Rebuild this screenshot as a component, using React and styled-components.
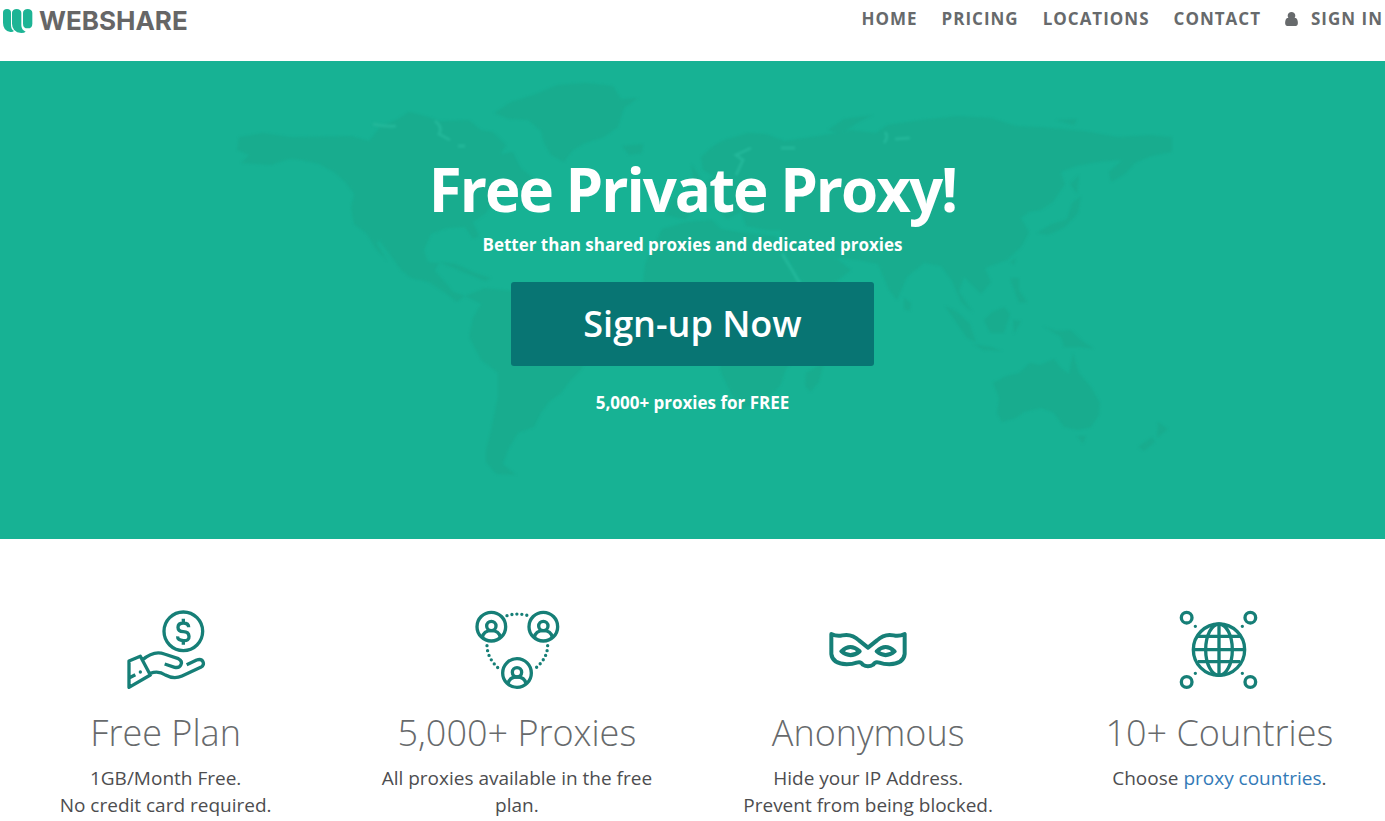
import styled, { createGlobalStyle } from "styled-components";

const GlobalStyle = createGlobalStyle`
  * {
    box-sizing: border-box;
  }

  body {
    margin: 0;
    background: #fff;
    color: #4d4d4f;
    font-family: "Open Sans", "Noto Sans", sans-serif;
  }

  h1,
  h2,
  p {
    margin: 0;
  }
`;

const LogoMark = () => (
  <svg width="32" height="25" viewBox="6 24 96 75" fill="#1db495" aria-hidden="true">
    <path d="M9 38a12 11 0 0 1 24 0v38q0 12 9 17q-4 4-11 3q-22-4-22-28z" />
    <path d="M36 38a14 11 0 0 1 28 0v38q0 14 13 19q-4 4-13 4q-28-3-28-28z" />
    <path d="M69 38a14 11 0 0 1 28 0v33q0 14-14 14t-14-14z" />
  </svg>
);

const UserIcon = () => (
  <svg width="13" height="14" viewBox="0 128 1280 1408" fill="currentColor" aria-hidden="true">
    <path d="M1280 1271q0 109-62.5 187t-150.5 78h-854q-88 0-150.5-78t-62.5-187q0-85 8.5-160.5t31.5-152 58.5-131 94-89 134.5-34.5q131 128 313 128t313-128q76 0 134.5 34.5t94 89 58.5 131 31.5 152 8.5 160.5zM1024 512q0 159-112.5 271.5t-271.5 112.5-271.5-112.5-112.5-271.5 112.5-271.5 271.5-112.5 271.5 112.5 112.5 271.5z" />
  </svg>
);

const WorldMap = () => (
  <MapSvg viewBox="202 61 980 478" aria-hidden="true">
    {/* the americas */}
    <path d="M238 137L262 133 290 137 350 136 368 141 380 126 395 120 408 112 424 116 440 121 468 120 480 130 492 132 505 145 500 154 512 152 520 168 532 178 536 186 520 190 505 196 492 203 484 214 472 222 478 236 472 239 464 227 446 228 430 234 423 250 427 262 438 263 434 271 445 283 452 292 464 296 456 302 443 292 428 282 410 278 400 270 390 256 378 240 376 244 386 261 374 248 366 234 353 224 350 208 353 194 345 183 333 172 318 164 300 160 288 159 270 165 240 163 248 155 236 150z" />
    <path d="M438 262L455 264 472 272 490 278 484 281 462 272z" />
    <path d="M493 113L510 102 535 94 556 85 585 83 612 86 620 99 637 98 623 108 617 127 603 137 584 143 572 150 563 162 550 155 543 143 540 131 527 120 508 119z" />
    <path d="M464 296L484 288 512 291 535 302 548 318 572 328 594 338 589 352 580 370 570 380 560 393 548 402 540 413 533 427 517 433 507 450 502 464 515 475 495 474 485 462 485 450 490 430 497 397 497 373 480 360 468 337 472 318 480 304z" />
    {/* europe, asia and africa */}
    <path d="M700 157L712 146 723 140 747 133 765 134 784 141 823 135 850 130 875 133 886 125 920 120 957 116 990 118 1015 126 1040 127 1083 131 1117 137 1148 135 1171 137 1171 152 1150 156 1134 163 1124 174 1110 182 1108 172 1121 160 1097 162 1075 166 1060 172 1064 184 1052 202 1040 210 1028 212 1020 218 1028 232 1021 246 1006 260 984 268 990 282 980 294 969 283 963 277 958 292 972 313 960 302 951 281 940 266 923 263 906 277 896 300 888 290 877 264 858 260 835 258 850 270 835 282 808 294 792 268 780 247 780 230 766 230 745 226 740 212 726 219 713 206 696 208 684 219 665 215 670 200 690 195 702 186 713 176 702 170z" />
    <path d="M661 229L685 222 711 220 720 229 744 233 775 236 780 253 794 278 806 291 828 290 818 307 801 325 801 350 785 369 779 386 762 402 740 408 730 393 719 370 722 348 711 327 700 317 666 317 648 302 642 284 644 264z" />
    <path d="M805 373L817 366 823 362 818 382 809 392 804 385z" />
    <path d="M690 164L699 177 701 187 686 189 692 179zM621 146L642 144 641 153 628 155z" />
    <path d="M827 130L843 119 872 115 856 123 840 134zM1055 120L1076 119 1073 125z" />
    <path d="M1036 233L1051 224 1066 219 1071 203 1080 196 1077 213 1064 227 1047 235zM1069 184L1078 175 1076 194z" />
    {/* oceania */}
    <path d="M992 383L1005 376 1018 373 1029 363 1039 365 1053 359 1060 368 1068 374 1072 353 1078 373 1090 387 1099 403 1098 415 1090 427 1077 430 1063 427 1053 413 1040 408 1023 412 1015 418 1001 422 996 413 998 398z" />
    <path d="M1076 436L1085 436 1082 444zM1157 422L1167 429 1156 438zM1151 437L1154 442 1143 451 1137 447z" />
    <path d="M1042 326L1055 331 1070 330 1080 340 1093 349 1078 347 1063 347 1060 337z" />
    <path d="M983 320L991 312 1003 307 1009 314 1003 333 989 333zM944 306L955 311 969 324 975 342 966 338zM972 344L990 347 1001 351 982 350zM1012 320L1020 321 1013 334zM1009 278L1018 278 1018 290 1026 302 1018 303zM903 298L910 303 909 311 903 309zM1009 262L1015 258 1013 265z" />
    <g fill="none" stroke="#22b799" strokeWidth="3">
      <path d="M372 124Q384 127 395 126M434 121Q442 127 438 134L449 140M457 146L464 146M735 175L742 160 735 155 750 148M780 148L794 148M883 143Q888 137 884 132M894 139L909 138M781 254L791 270 799 284" />
    </g>
  </MapSvg>
);

const HandCoin = () => (
  <IconSvg viewBox="48 30 240 240">
    <circle cx="220" cy="94" r="58" />
    <path d="M236 82q0-13-16-13t-16 13t16 13t17 14t-17 13t-17-13M220 56v13M220 122v12" />
    <path d="M57 183L91 169 121 225 57 262zM57 234L76 224M97 180C120 160 142 154 163 162L205 176Q218 183 213 194T194 202L164 192M121 220C139 213 153 216 166 225Q192 239 216 228L272 202Q284 195 279 185T260 180L230 194" />
    <circle cx="91" cy="216" r="5" fill="currentColor" stroke="none" />
  </IconSvg>
);

const People = () => (
  <IconSvg viewBox="37 30 240 240">
    {[
      [80, 80],
      [236, 80],
      [157, 219],
    ].map(([x, y]) => (
      <g key={`${x}-${y}`} transform={`translate(${x} ${y})`}>
        <circle r="43" />
        <circle cy="-2" r="14" />
        <path d="M-27 32Q-23 12 0 12T27 32" />
      </g>
    ))}
    <path
      d="M127 47Q157 38 187 46M67 137Q68 176 104 207M249 137Q248 176 212 205"
      strokeLinecap="round"
      strokeDasharray="0 15"
    />
  </IconSvg>
);

const Mask = () => (
  <IconSvg viewBox="40 0 240 240" $stroke={12}>
    <path d="M50 72Q67 80 83 76Q111 70 133 91L160 113 187 91Q209 70 237 76Q253 80 270 72V132Q267 161 224 163Q207 163 194 158Q181 154 176 164Q160 174 144 164Q139 154 126 158Q113 163 96 163Q53 161 50 132z" />
    <path d="M80 124Q107 98 135 124Q107 147 80 124zM186 124Q213 98 240 124Q213 147 186 124z" />
  </IconSvg>
);

const Globe = () => (
  <IconSvg viewBox="45 30 240 240">
    <circle cx="165" cy="149" r="77" />
    <ellipse cx="165" cy="149" rx="40" ry="77" />
    <path d="M165 72V226M88 149H242M102 109H228M102 185H228" />
    <circle cx="68" cy="53" r="16" />
    <circle cx="259" cy="53" r="16" />
    <circle cx="68" cy="246" r="16" />
    <circle cx="259" cy="246" r="16" />
    <path d="M94 79h0M235 79h0M94 220h0M235 220h0" strokeLinecap="round" />
  </IconSvg>
);

const navLinks = ["Home", "Pricing", "Locations", "Contact"];

const features = [
  {
    icon: <HandCoin />,
    title: "Free Plan",
    text: (
      <>
        1GB/Month Free.
        <br />
        No credit card required.
      </>
    ),
  },
  {
    icon: <People />,
    title: "5,000+ Proxies",
    text: "All proxies available in the free plan.",
  },
  {
    icon: <Mask />,
    title: "Anonymous",
    text: (
      <>
        Hide your IP Address.
        <br />
        Prevent from being blocked.
      </>
    ),
  },
  {
    icon: <Globe />,
    title: "10+ Countries",
    text: (
      <>
        Choose <a href="#countries">proxy countries</a>.
      </>
    ),
  },
];

const App = () => {
  return (
    <>
      <GlobalStyle />
      <Header>
        <Logo href="#home">
          <LogoMark />
          WEBSHARE
        </Logo>
        <Nav>
          {navLinks.map((link) => (
            <NavLink key={link} href={`#${link.toLowerCase()}`}>
              {link}
            </NavLink>
          ))}
          <NavLink href="#sign-in">
            <UserIcon />
            Sign in
          </NavLink>
        </Nav>
      </Header>
      <main>
        <Hero>
          <WorldMap />
          <HeroContent>
            <HeroTitle>Free Private Proxy!</HeroTitle>
            <HeroText>Better than shared proxies and dedicated proxies</HeroText>
            <SignUpButton type="button">Sign-up Now</SignUpButton>
            <HeroText>5,000+ proxies for FREE</HeroText>
          </HeroContent>
        </Hero>
        <Features>
          {features.map(({ icon, title, text }) => (
            <Feature key={title}>
              {icon}
              <FeatureTitle>{title}</FeatureTitle>
              <FeatureText>{text}</FeatureText>
            </Feature>
          ))}
        </Features>
      </main>
    </>
  );
};

export default App;

const Header = styled.header`
  display: flex;
  align-items: flex-start;
  justify-content: space-between;
  height: 61px;
  padding: 8px 2px 0;
`;

const Logo = styled.a`
  display: flex;
  align-items: center;
  gap: 5px;
  color: #666;
  font-family: Inter, "Liberation Sans", sans-serif;
  font-size: 26px;
  font-weight: 700;
  line-height: 25px;
  text-decoration: none;
`;

const Nav = styled.nav`
  display: flex;
  gap: 24px;
`;

const NavLink = styled.a`
  display: flex;
  align-items: center;
  gap: 13px;
  color: #676a6c;
  font-size: 17px;
  font-weight: 700;
  letter-spacing: 1px;
  line-height: 22px;
  text-decoration: none;
  text-transform: uppercase;
`;

const Hero = styled.section`
  position: relative;
  overflow: hidden;
  background: #17b294;
  color: #fff;
  text-align: center;
`;

const MapSvg = styled.svg`
  position: absolute;
  top: 0;
  left: 50%;
  width: 980px;
  height: 478px;
  transform: translateX(-50%);
  fill: #18ac8e;
  filter: blur(1px);
`;

const HeroContent = styled.div`
  position: relative;
  display: flex;
  flex-direction: column;
  align-items: center;
  padding: 95px 16px 123px;
`;

const HeroTitle = styled.h1`
  margin-bottom: 10px;
  font-size: 60px;
  font-weight: 700;
  letter-spacing: -2px;
  line-height: 66px;
`;

const HeroText = styled.p`
  font-size: 17px;
  font-weight: 700;
  line-height: 26px;
`;

const SignUpButton = styled.button`
  margin: 24px 0;
  padding: 16px 72px;
  border: 0;
  border-radius: 3px;
  background: #087573;
  color: #fff;
  font-family: inherit;
  font-size: 36px;
  font-weight: 600;
  line-height: 52px;
  cursor: pointer;
`;

const Features = styled.section`
  display: grid;
  grid-template-columns: repeat(4, 1fr);
  padding-top: 71px;
  margin: 0 -10px;
  overflow: hidden;
`;

const Feature = styled.article`
  display: flex;
  flex-direction: column;
  align-items: center;
  padding: 0 20px;
  text-align: center;
`;

const IconSvg = styled.svg.attrs({ "aria-hidden": true })`
  width: 80px;
  height: 80px;
  overflow: visible;
  color: #167f77;
  fill: none;
  stroke: currentColor;
  stroke-width: ${({ $stroke = 10 }) => $stroke};
  stroke-linejoin: round;
`;

const FeatureTitle = styled.h2`
  margin-top: 23px;
  color: #676a6c;
  font-size: 36px;
  font-weight: 300;
  line-height: 40px;
`;

const FeatureText = styled.p`
  margin-top: 12px;
  font-size: 19px;
  line-height: 27px;

  a {
    color: #337ab7;
    text-decoration: none;
  }
`;
